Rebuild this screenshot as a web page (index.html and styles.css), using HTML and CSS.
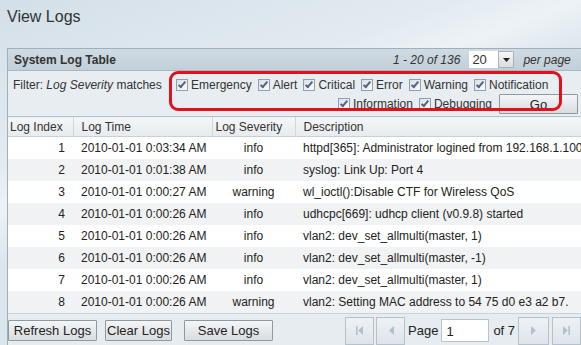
FILE: index.html
```html
<!DOCTYPE html>
<html lang="en">
<head>
    <meta charset="UTF-8">
    <title>View Logs</title>
    <link rel="stylesheet" href="styles.css">
</head>
<body>
    <h1 class="page-title">View Logs</h1>

    <div class="panel">
        <div class="panel-head">
            <span class="panel-title">System Log Table</span>
            <div class="paging-info">
                <em>1 - 20 of 136</em>
                <span class="select">
                    <span class="select-value">20</span>
                    <span class="select-btn">
                        <svg width="7" height="4" viewBox="0 0 7 4"><path d="M0 0h7L3.5 4z" fill="#222"/></svg>
                    </span>
                </span>
                <em>per page</em>
            </div>
        </div>

        <div class="filter">
            <div class="filter-label">Filter: <em>Log Severity</em> matches</div>
            <div class="filter-opts">
                <div class="opts-line">
                    <label class="opt"><span class="cb"></span>Emergency</label>
                    <label class="opt"><span class="cb"></span>Alert</label>
                    <label class="opt"><span class="cb"></span>Critical</label>
                    <label class="opt"><span class="cb"></span>Error</label>
                    <label class="opt"><span class="cb"></span>Warning</label>
                    <label class="opt"><span class="cb"></span>Notification</label>
                </div>
                <div class="opts-line opts-end">
                    <label class="opt"><span class="cb"></span>Information</label>
                    <label class="opt"><span class="cb"></span>Debugging</label>
                    <button class="btn go-btn">Go</button>
                </div>
            </div>
            <div class="highlight"></div>
        </div>

        <table class="log-table">
            <colgroup>
                <col style="width: 65px">
                <col style="width: 139px">
                <col style="width: 83px">
                <col>
            </colgroup>
            <thead>
                <tr>
                    <th class="c-index">Log Index</th>
                    <th>Log Time</th>
                    <th class="c-sev-head">Log Severity</th>
                    <th>Description</th>
                </tr>
            </thead>
            <tbody>
                <tr><td class="c-index">1</td><td>2010-01-01 0:03:34 AM</td><td class="c-sev">info</td><td>httpd[365]: Administrator logined from 192.168.1.100</td></tr>
                <tr><td class="c-index">2</td><td>2010-01-01 0:01:38 AM</td><td class="c-sev">info</td><td>syslog: Link Up: Port 4</td></tr>
                <tr><td class="c-index">3</td><td>2010-01-01 0:00:27 AM</td><td class="c-sev">warning</td><td>wl_ioctl():Disable CTF for Wireless QoS</td></tr>
                <tr><td class="c-index">4</td><td>2010-01-01 0:00:26 AM</td><td class="c-sev">info</td><td>udhcpc[669]: udhcp client (v0.9.8) started</td></tr>
                <tr><td class="c-index">5</td><td>2010-01-01 0:00:26 AM</td><td class="c-sev">info</td><td>vlan2: dev_set_allmulti(master, 1)</td></tr>
                <tr><td class="c-index">6</td><td>2010-01-01 0:00:26 AM</td><td class="c-sev">info</td><td>vlan2: dev_set_allmulti(master, -1)</td></tr>
                <tr><td class="c-index">7</td><td>2010-01-01 0:00:26 AM</td><td class="c-sev">info</td><td>vlan2: dev_set_allmulti(master, 1)</td></tr>
                <tr><td class="c-index">8</td><td>2010-01-01 0:00:26 AM</td><td class="c-sev">warning</td><td>vlan2: Setting MAC address to 54 75 d0 e3 a2 b7.</td></tr>
            </tbody>
        </table>

        <div class="panel-foot">
            <div class="actions">
                <button class="btn btn-refresh">Refresh Logs</button>
                <button class="btn btn-clear">Clear Logs</button>
                <button class="btn btn-save">Save Logs</button>
            </div>
            <div class="pager">
                <button class="pg-btn"><svg width="9" height="9" viewBox="0 0 9 9"><path d="M1 0h1.6v9H1z M8 0v9L3.2 4.5z" fill="#b4c0cb"/></svg></button>
                <button class="pg-btn pg-prev"><svg width="6" height="9" viewBox="0 0 6 9"><path d="M6 0v9L1 4.5z" fill="#b4c0cb"/></svg></button>
                <span class="pg-label pg-page">Page</span>
                <span class="pg-input">1</span>
                <span class="pg-label pg-of">of 7</span>
                <button class="pg-btn pg-next"><svg width="6" height="9" viewBox="0 0 6 9"><path d="M0 0v9L5 4.5z" fill="#b4c0cb"/></svg></button>
                <button class="pg-btn pg-last"><svg width="9" height="9" viewBox="0 0 9 9"><path d="M1 0v9L5.8 4.5z M6.4 0H8v9H6.4z" fill="#b4c0cb"/></svg></button>
            </div>
        </div>
    </div>
</body>
</html>
```

FILE: styles.css
```css
body {
    margin: 0;
    font-family: "Liberation Sans", Arial, sans-serif;
    font-size: 12px;
    color: #222;
    overflow: hidden;
    height: 345px;
    background: linear-gradient(160deg, #d3dfe8 0%, #e3ebf1 30%, #edf2f6 38%, #dbe5ec 48%, #d8e3eb 100%);
}
.page-title {
    margin: 0;
    padding: 8px 7px 0;
    height: 48px;
    box-sizing: border-box;
    font-size: 16px;
    font-weight: normal;
    color: #333;
}
.panel {
    margin-left: 7px;
    width: 600px;
    border: 1px solid #9eb0bd;
    border-right: none;
    background: #e8edf1;
}
.panel-head {
    height: 21px;
    display: flex;
    align-items: center;
    justify-content: space-between;
    padding-left: 6px;
    background: linear-gradient(#d0dbe3, #c2cfd9);
    border-bottom: 1px solid #a7b7c3;
}
.panel-title {
    font-weight: bold;
    color: #333;
}
.paging-info {
    display: flex;
    align-items: center;
    width: 215px;
    color: #333;
}
.paging-info em {
    font-style: italic;
}
.select {
    display: flex;
    margin: 0 9px 0 9px;
    height: 17px;
}
.select-value {
    width: 29px;
    background: #fff;
    line-height: 17px;
    padding-left: 3px;
    box-sizing: border-box;
    font-size: 13px;
}
.select-btn {
    width: 16px;
    display: flex;
    align-items: center;
    justify-content: center;
    background: linear-gradient(#f6f6f6, #d9dde0);
    border: 1px solid #a9b2b9;
    box-sizing: border-box;
}
.filter {
    position: relative;
    height: 45px;
    display: flex;
    padding: 0 0 0 5px;
    color: #333;
}
.filter-label {
    padding-top: 7px;
    width: 163px;
}
.filter-label em {
    font-style: italic;
}
.filter-opts {
    width: 402px;
    padding-top: 6px;
}
.opts-line {
    display: flex;
    align-items: center;
    height: 16px;
    gap: 6px;
}
.opts-end {
    justify-content: flex-end;
    height: 22px;
}
.opt {
    display: flex;
    align-items: center;
    gap: 3px;
}
.cb {
    width: 10px;
    height: 10px;
    border: 1px solid #8e9fb0;
    background: linear-gradient(135deg, #dcdfe3, #fbfbfb) no-repeat;
    position: relative;
}
.cb::after {
    content: "";
    position: absolute;
    left: 3px;
    top: 0;
    width: 2px;
    height: 6px;
    border: solid #4d6487;
    border-width: 0 2px 2px 0;
    transform: rotate(40deg);
}
.btn {
    font-family: "Liberation Sans", Arial, sans-serif;
    font-size: 13px;
    color: #222;
    height: 21px;
    padding: 0;
    border: 1px solid #8d9aa4;
    background: linear-gradient(#f4f5f6, #d8dde1);
    border-radius: 1px;
}
.go-btn {
    width: 79px;
    height: 20px;
    margin-left: 1px;
}
.highlight {
    position: absolute;
    left: 161px;
    top: 0;
    width: 387px;
    height: 34px;
    border: 3px solid #e3101c;
    border-radius: 9px;
}
.log-table {
    width: 100%;
    border-collapse: collapse;
    table-layout: fixed;
    background: #fff;
}
.log-table th {
    height: 19px;
    text-align: left;
    font-weight: normal;
    color: #333;
    padding: 0 8px;
    background: linear-gradient(#f4f6f7, #e7ebee);
    border-top: 1px solid #b5c2cc;
    border-bottom: 1px solid #c6d0d7;
    border-left: 1px solid #cfd6dc;
    white-space: nowrap;
}
.log-table th:first-child {
    border-left: none;
}
.log-table th.c-index {
    padding-left: 2px;
}
.log-table th.c-sev-head {
    padding-left: 3px;
}
.log-table td {
    height: 22px;
    padding: 0 8px;
    white-space: nowrap;
    overflow: hidden;
    color: #222;
}
.log-table td.c-index {
    text-align: right;
}
.log-table td.c-sev {
    text-align: center;
}
.log-table tbody tr:nth-child(even) td {
    background: #f1f2f3;
}
.panel-foot {
    height: 33px;
    display: flex;
    align-items: center;
    background: #e6ecf0;
    border-top: 1px solid #c9d3da;
}
.actions {
    display: flex;
    gap: 8px;
    width: 337px;
}
.btn-refresh {
    width: 89px;
}
.btn-clear {
    width: 67px;
}
.btn-save {
    width: 89px;
    margin-left: 4px;
}
.pager {
    display: flex;
    align-items: center;
}
.pg-btn {
    width: 29px;
    height: 28px;
    padding: 0;
    display: flex;
    align-items: center;
    justify-content: center;
    border: 1px solid #b6c2cb;
    background: linear-gradient(#eef2f5, #dde4ea);
}
.pg-prev {
    margin-left: 2px;
}
.pg-next {
    width: 31px;
    margin-left: 3px;
}
.pg-last {
    margin-left: 3px;
}
.pg-label {
    font-size: 13px;
    color: #222;
}
.pg-page {
    margin: 0 3px;
}
.pg-of {
    margin-left: 4px;
}
.pg-input {
    width: 48px;
    height: 23px;
    line-height: 23px;
    padding-left: 4px;
    box-sizing: border-box;
    background: #fff;
    border: 1px solid #b9c3ca;
    font-size: 13px;
}
```
